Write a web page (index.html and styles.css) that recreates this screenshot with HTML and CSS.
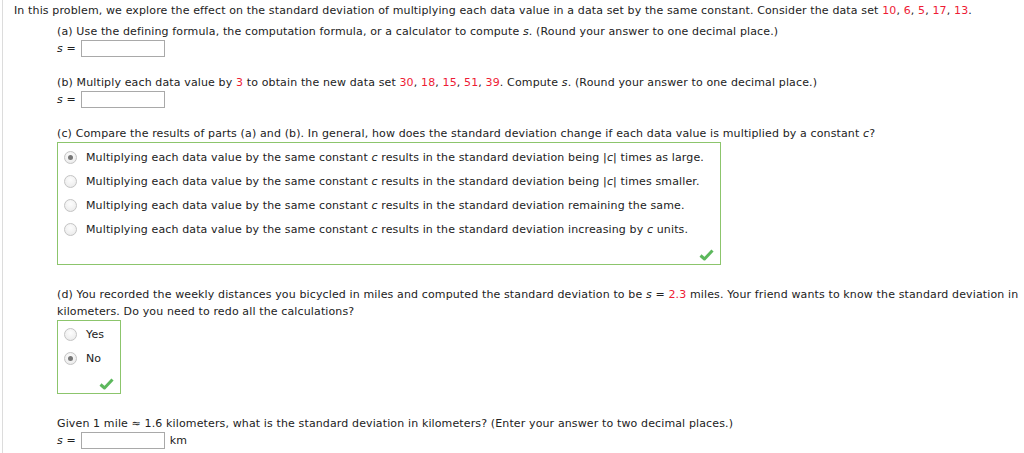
FILE: index.html
```html
<!DOCTYPE html>
<html lang="en">
<head>
    <meta charset="UTF-8">
    <title>Standard Deviation Exercise</title>
    <link rel="stylesheet" href="styles.css">
</head>
<body>
    <div class="question">
        <p class="intro">In this problem, we explore the effect on the standard deviation of multiplying each data value in a data set by the same constant. Consider the data set <span class="val">10</span>, <span class="val">6</span>, <span class="val">5</span>, <span class="val">17</span>, <span class="val">13</span>.</p>

        <div class="parts">
            <div class="part">
                <p>(a) Use the defining formula, the computation formula, or a calculator to compute <i>s</i>. (Round your answer to one decimal place.)</p>
                <div class="answer"><span><i>s</i> =</span><span class="box"></span></div>
            </div>

            <div class="part">
                <p>(b) Multiply each data value by <span class="val">3</span> to obtain the new data set <span class="val">30</span>, <span class="val">18</span>, <span class="val">15</span>, <span class="val">51</span>, <span class="val">39</span>. Compute <i>s</i>. (Round your answer to one decimal place.)</p>
                <div class="answer"><span><i>s</i> =</span><span class="box"></span></div>
            </div>

            <div class="part">
                <p>(c) Compare the results of parts (a) and (b). In general, how does the standard deviation change if each data value is multiplied by a constant <i>c</i>?</p>
                <div class="choices wide">
                    <div class="choice"><span class="radio checked"></span><span>Multiplying each data value by the same constant <i>c</i> results in the standard deviation being |<i>c</i>| times as large.</span></div>
                    <div class="choice"><span class="radio"></span><span>Multiplying each data value by the same constant <i>c</i> results in the standard deviation being |<i>c</i>| times smaller.</span></div>
                    <div class="choice"><span class="radio"></span><span>Multiplying each data value by the same constant <i>c</i> results in the standard deviation remaining the same.</span></div>
                    <div class="choice"><span class="radio"></span><span>Multiplying each data value by the same constant <i>c</i> results in the standard deviation increasing by <i>c</i> units.</span></div>
                    <div class="mark">
                        <svg width="15" height="12" viewBox="0 0 15 12"><path d="M1.5 6.5 L5.5 10 L13.5 1.5" fill="none" stroke="#5cb85c" stroke-width="3" stroke-linejoin="round"/></svg>
                    </div>
                </div>
            </div>

            <div class="part part-d">
                <p>(d) You recorded the weekly distances you bicycled in miles and computed the standard deviation to be <i>s</i> = <span class="val">2.3</span> miles. Your friend wants to know the standard deviation in kilometers. Do you need to redo all the calculations?</p>
                <div class="choices narrow">
                    <div class="choice"><span class="radio"></span><span>Yes</span></div>
                    <div class="choice"><span class="radio checked"></span><span>No</span></div>
                    <div class="mark">
                        <svg width="15" height="12" viewBox="0 0 15 12"><path d="M1.5 6.5 L5.5 10 L13.5 1.5" fill="none" stroke="#5cb85c" stroke-width="3" stroke-linejoin="round"/></svg>
                    </div>
                </div>
            </div>

            <div class="part part-km">
                <p>Given 1 mile &asymp; 1.6 kilometers, what is the standard deviation in kilometers? (Enter your answer to two decimal places.)</p>
                <div class="answer"><span><i>s</i> =</span><span class="box"></span><span>km</span></div>
            </div>
        </div>
    </div>
</body>
</html>
```

FILE: styles.css
```css
body {
    margin: 0;
    font-family: "DejaVu Sans", Verdana, sans-serif;
    font-size: 11px;
    letter-spacing: 0.13px;
    color: #222;
    background-color: #fff;
}
p {
    margin: 0;
}
.question {
    margin-left: 2px;
    padding: 2px 0 5px 11px;
    border-left: 1px solid #dcdcdc;
    min-height: 439px;
}
.intro {
    line-height: 17px;
}
.parts {
    margin-left: 43px;
    margin-top: 4px;
}
.part {
    line-height: 17px;
    margin-bottom: 17px;
}
.part-d {
    margin-top: 21px;
    margin-bottom: 21px;
}
.part-km {
    margin-bottom: 0;
}
.val {
    color: #ee1c35;
}
.answer {
    display: flex;
    align-items: center;
    gap: 5px;
    height: 17px;
}
.box {
    display: inline-block;
    width: 82px;
    height: 15px;
    border: 1px solid #a9a9a9;
    background-color: #fff;
}
.choices {
    border: 1px solid #8cc56c;
    padding-top: 2px;
}
.choices.wide {
    width: 662px;
}
.choices.narrow {
    width: 62px;
    padding-top: 1px;
}
.choice {
    display: flex;
    align-items: center;
    height: 24px;
    padding-left: 6px;
}
.radio {
    display: inline-block;
    width: 11px;
    height: 11px;
    margin-right: 9px;
    border: 1px solid #c4c4c4;
    border-radius: 50%;
    background: radial-gradient(circle at 50% 35%, #fdfdfd 0%, #eeeeee 70%, #dddddd 100%);
    position: relative;
    flex-shrink: 0;
}
.radio.checked::after {
    content: "";
    position: absolute;
    left: 3px;
    top: 3px;
    width: 5px;
    height: 5px;
    border-radius: 50%;
    background: #777;
}
.mark {
    display: flex;
    justify-content: flex-end;
    align-items: flex-end;
    height: 20px;
    padding: 0 6px 3px 0;
}
.narrow .mark {
    height: 20px;
}
i {
    font-style: italic;
}
```
